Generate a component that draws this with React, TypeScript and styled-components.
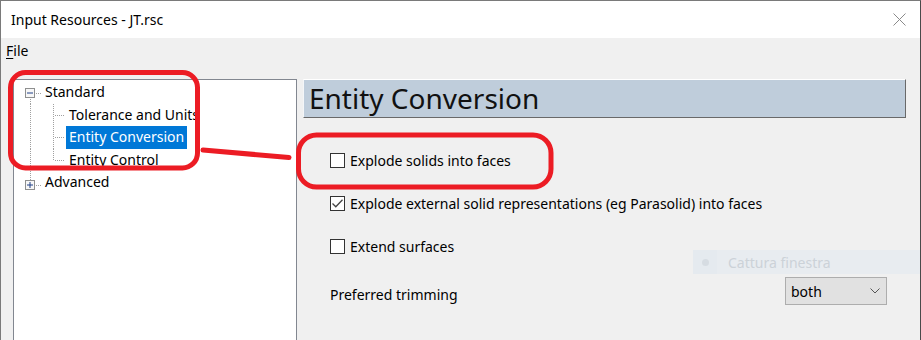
import React from "react";
import styled, { createGlobalStyle } from "styled-components";

const GlobalStyle = createGlobalStyle`
  html, body { margin: 0; padding: 0; background: #f0f0f0; }
  body { font-family: "Noto Sans", "Open Sans", sans-serif; }
  * { box-sizing: border-box; }
`;

const Window = styled.div`
  position: relative;
  width: 921px;
  height: 340px;
  overflow: hidden;
  background: #f0f0f0;
  border-top: 1px solid #7a7a7a;
  border-left: 1px solid #7a7a7a;
  border-right: 1px solid #4a4a4a;
  display: flex;
  flex-direction: column;
  font-size: 14px;
  color: #000;
`;

const TitleBar = styled.div`
  height: 37px;
  flex: none;
  background: #fff;
  display: flex;
  align-items: center;
  justify-content: space-between;
  padding-left: 10px;
  padding-right: 14px;
`;

const TitleText = styled.span`
  font-size: 14px;
  line-height: 20px;
`;

const CloseIcon = styled.svg`
  display: block;
  width: 13px;
  height: 13px;
`;

const MenuBar = styled.div`
  height: 26px;
  flex: none;
  display: flex;
  align-items: center;
  padding-left: 5px;
`;

const MenuItem = styled.span`
  font-size: 14px;
  line-height: 20px;
`;

const Mnemonic = styled.span`
  text-decoration: underline;
  text-underline-offset: 2px;
  text-decoration-thickness: 1px;
`;

const Main = styled.div`
  flex: 1;
  display: flex;
  padding-top: 15px;
  min-height: 0;
`;

const Tree = styled.div`
  flex: none;
  width: 284px;
  margin-left: 12px;
  background: #fff;
  border: 1px solid #828790;
  border-bottom: none;
  padding-top: 1px;
  display: flex;
  flex-direction: column;
`;

const TreeRow = styled.div`
  height: 22.5px;
  display: flex;
  align-items: center;
`;

const Guide = styled.svg`
  display: block;
  flex: none;
  height: 22.5px;
`;

const TreeLabel = styled.span<{ $selected?: boolean }>`
  height: 22.5px;
  line-height: 22px;
  padding: 0 3px;
  font-size: 14px;
  white-space: nowrap;
  background: ${(p) => (p.$selected ? "#0078d7" : "transparent")};
  color: ${(p) => (p.$selected ? "#fff" : "#000")};
`;

const Content = styled.div`
  flex: 1;
  margin-left: 6px;
  margin-right: 14px;
  display: flex;
  flex-direction: column;
`;

const PageHeading = styled.div`
  height: 39px;
  flex: none;
  background: #bfcddb;
  border-top: 1px solid #ffffff;
  border-left: 1px solid #f4f6f8;
  border-right: 1px solid #696969;
  border-bottom: 1px solid #696969;
  padding-left: 5px;
  font-size: 28px;
  line-height: 37px;
  color: #111;
  white-space: nowrap;
`;

const Options = styled.div`
  padding-top: 21px;
  padding-left: 27px;
  display: flex;
  flex-direction: column;
`;

const CheckRow = styled.label`
  height: 43px;
  display: flex;
  align-items: center;
  gap: 5px;
  font-size: 14px;
`;

const Box = styled.span`
  width: 15px;
  height: 15px;
  flex: none;
  border: 1px solid #333;
  background: #fff;
  display: flex;
  align-items: center;
  justify-content: center;
`;

const TrimRow = styled.div`
  margin-top: 9px;
  margin-right: 19px;
  display: flex;
  justify-content: space-between;
  align-items: flex-start;
`;

const TrimLabel = styled.span`
  margin-top: 8px;
  line-height: 20px;
  font-size: 14px;
`;

const Select = styled.div`
  width: 102px;
  height: 28px;
  border: 1px solid #adadad;
  background: #e1e1e1;
  display: flex;
  align-items: center;
  justify-content: space-between;
  padding: 0 6px 0 5px;
  font-size: 14px;
`;

const Toast = styled.div`
  position: absolute;
  left: 692px;
  top: 249px;
  width: 240px;
  height: 24px;
  display: flex;
  align-items: center;
  background: #e8ecf0;
  color: #ccd2d8;
  font-size: 14px;
`;

const ToastDot = styled.span`
  width: 24px;
  height: 24px;
  flex: none;
  display: flex;
  align-items: center;
  justify-content: center;
  background: #e5eaef;
  margin-right: 11px;
  &::before {
    content: "";
    width: 7px;
    height: 7px;
    border-radius: 50%;
    background: #d6dce2;
  }
`;

const Markup = styled.svg`
  position: absolute;
  left: -1px;
  top: -1px;
  width: 921px;
  height: 340px;
  pointer-events: none;
`;

const DOT = "#a0a0a0";

type Kind = "rootFirst" | "child" | "childLast" | "rootLast";

function Expander({ y, open }: { y: number; open: boolean }) {
  return (
    <>
      <rect x={11.5} y={y + 0.5} width={9} height={9} fill="#f7f7f7" stroke="#8e8f8f" />
      <line x1={13} y1={y + 5} x2={19} y2={y + 5} stroke="#1f3f86" />
      {!open && <line x1={16} y1={y + 2} x2={16} y2={y + 8} stroke="#1f3f86" />}
    </>
  );
}

function TreeGuide({ kind }: { kind: Kind }) {
  const dash = { stroke: DOT, strokeDasharray: "1 1", shapeRendering: "crispEdges" as const };
  if (kind === "rootFirst" || kind === "rootLast") {
    const by = kind === "rootFirst" ? 7 : 9;
    return (
      <Guide width={28} viewBox="0 0 28 22.5">
        {kind === "rootFirst" ? (
          <line x1={16.5} y1={by + 11} x2={16.5} y2={22.5} {...dash} />
        ) : (
          <line x1={16.5} y1={0} x2={16.5} y2={by} {...dash} />
        )}
        <line x1={22} y1={by + 5.5} x2={28} y2={by + 5.5} {...dash} />
        <Expander y={by} open={kind === "rootFirst"} />
      </Guide>
    );
  }
  return (
    <Guide width={52} viewBox="0 0 52 22.5">
      <line x1={16.5} y1={0} x2={16.5} y2={22.5} {...dash} />
      <line x1={39.5} y1={0} x2={39.5} y2={kind === "childLast" ? 12 : 22.5} {...dash} />
      <line x1={41} y1={11.5} x2={51} y2={11.5} {...dash} />
    </Guide>
  );
}

const treeItems: { label: string; kind: Kind; selected?: boolean }[] = [
  { label: "Standard", kind: "rootFirst" },
  { label: "Tolerance and Units", kind: "child" },
  { label: "Entity Conversion", kind: "child", selected: true },
  { label: "Entity Control", kind: "childLast" },
  { label: "Advanced", kind: "rootLast" },
];

const checks = [
  { label: "Explode solids into faces", checked: false },
  { label: "Explode external solid representations (eg Parasolid) into faces", checked: true },
  { label: "Extend surfaces", checked: false },
];

export default function App() {
  return (
    <>
      <GlobalStyle />
      <Window>
        <TitleBar>
          <TitleText>Input Resources - JT.rsc</TitleText>
          <CloseIcon viewBox="0 0 13 13">
            <path d="M0.5 0.5 L12.5 12.5 M12.5 0.5 L0.5 12.5" stroke="#8a8a8a" strokeWidth={1} fill="none" />
          </CloseIcon>
        </TitleBar>
        <MenuBar>
          <MenuItem>
            <Mnemonic>F</Mnemonic>ile
          </MenuItem>
        </MenuBar>
        <Main>
          <Tree>
            {treeItems.map((it) => (
              <TreeRow key={it.label}>
                <TreeGuide kind={it.kind} />
                <TreeLabel $selected={it.selected}>{it.label}</TreeLabel>
              </TreeRow>
            ))}
          </Tree>
          <Content>
            <PageHeading>Entity Conversion</PageHeading>
            <Options>
              {checks.map((c) => (
                <CheckRow key={c.label}>
                  <Box>
                    {c.checked && (
                      <svg width="13" height="13" viewBox="0 0 13 13">
                        <path d="M1.5 6.5 L4.8 9.8 L11.5 2.8" stroke="#444" strokeWidth={1.3} fill="none" />
                      </svg>
                    )}
                  </Box>
                  {c.label}
                </CheckRow>
              ))}
              <TrimRow>
                <TrimLabel>Preferred trimming</TrimLabel>
                <Select>
                  both
                  <svg width="10" height="6" viewBox="0 0 10 6">
                    <path d="M0.5 0.5 L5 5 L9.5 0.5" stroke="#555" strokeWidth={1} fill="none" />
                  </svg>
                </Select>
              </TrimRow>
            </Options>
          </Content>
        </Main>
        <Toast>
          <ToastDot />
          Cattura finestra
        </Toast>
        <Markup viewBox="0 0 921 340">
          <g fill="none" stroke="#ec1c24" strokeWidth={5} strokeLinecap="round">
            <rect x={10.5} y={72.5} width={187} height={95.5} rx={15} />
            <line x1={203} y1={150} x2={289} y2={157.5} />
            <rect x={298.5} y={135} width={252.5} height={52} rx={18} />
          </g>
        </Markup>
      </Window>
    </>
  );
}
